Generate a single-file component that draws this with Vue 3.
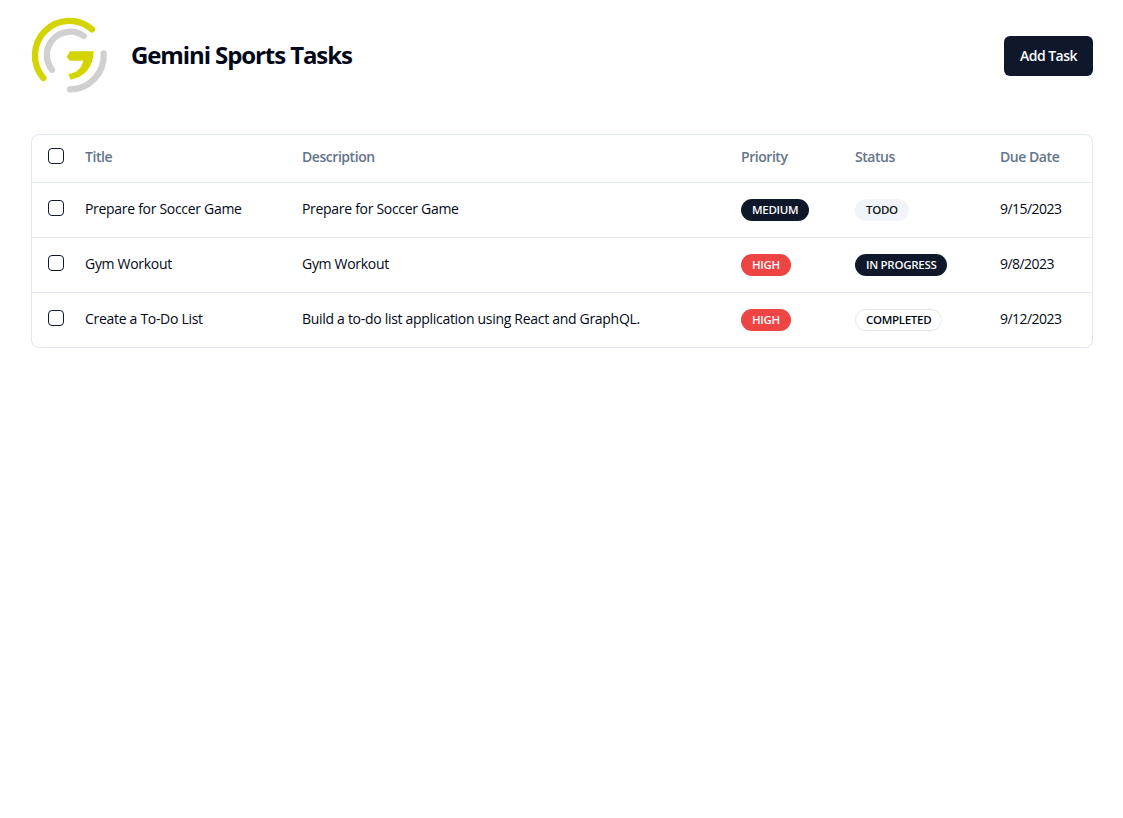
<script setup>
const tasks = [
  { title: 'Prepare for Soccer Game', description: 'Prepare for Soccer Game', priority: 'MEDIUM', pClass: 'dark', status: 'TODO', sClass: 'soft', due: '9/15/2023' },
  { title: 'Gym Workout', description: 'Gym Workout', priority: 'HIGH', pClass: 'red', status: 'IN PROGRESS', sClass: 'dark', due: '9/8/2023' },
  { title: 'Create a To-Do List', description: 'Build a to-do list application using React and GraphQL.', priority: 'HIGH', pClass: 'red', status: 'COMPLETED', sClass: 'outline', due: '9/12/2023' },
]
</script>

<template>
  <div class="page">
    <header class="top">
      <div class="brand">
        <svg class="logo" viewBox="33 39 228 228" width="76" height="76" fill="none" stroke-linecap="round">
          <defs><filter id="soft" x="-10%" y="-10%" width="120%" height="120%"><feGaussianBlur stdDeviation="2.2" /></filter></defs>
          <g filter="url(#soft)">
            <path d="M70 219 A103.5 103.5 0 0 1 216 73" stroke="#d3d400" stroke-width="19" />
            <path d="M96 194 A70 70 0 0 1 191 93" stroke="#d0d0d0" stroke-width="19" />
            <path d="M251 145 A102 102 0 0 1 150 253" stroke="#d0d0d0" stroke-width="19" />
            <path d="M140 156 L150 139 H221 C220 185 195 216 152 224 L145 207 C170 203 183 192 190 167 H150 Z" fill="#d3d400" />
          </g>
        </svg>
        <h1>Gemini Sports Tasks</h1>
      </div>
      <button class="add">Add Task</button>
    </header>
    <div class="card">
      <table>
        <colgroup>
          <col class="c0" /><col class="c1" /><col class="c2" /><col class="c3" /><col class="c4" /><col class="c5" />
        </colgroup>
        <thead>
          <tr>
            <th class="check"><span class="box"></span></th>
            <th>Title</th><th>Description</th><th>Priority</th><th>Status</th><th>Due Date</th>
          </tr>
        </thead>
        <tbody>
          <tr v-for="t in tasks" :key="t.title">
            <td class="check"><span class="box"></span></td>
            <td>{{ t.title }}</td>
            <td>{{ t.description }}</td>
            <td class="tag"><span class="badge" :class="t.pClass">{{ t.priority }}</span></td>
            <td class="tag"><span class="badge" :class="t.sClass">{{ t.status }}</span></td>
            <td class="date">{{ t.due }}</td>
          </tr>
        </tbody>
      </table>
    </div>
  </div>
</template>

<style>
html, body { margin: 0; background: #fff; }
</style>

<style scoped>
.page {
  padding: 18px 30.5px 0;
  font-family: "Open Sans", "Liberation Sans", sans-serif;
  color: #020817;
}
.top { display: flex; justify-content: space-between; align-items: center; height: 76px; margin-bottom: 40px; }
.brand { display: flex; align-items: center; gap: 24px; }
.logo { display: block; margin-left: .5px; overflow: visible; }
h1 { margin: 0 0 2px; font-size: 24px; line-height: 32px; font-weight: 700; letter-spacing: -1.1px; }
.add {
  width: 89px; height: 40px; border: 0; border-radius: 6px; background: #0f172a; color: #f8fafc;
  font: 600 14px/20px "Open Sans", sans-serif; letter-spacing: -.55px; padding: 0; margin-right: -.5px;
}
.card { border: 1px solid #e2e8f0; border-radius: 8px; overflow: hidden; }
table { width: 100%; border-collapse: collapse; table-layout: fixed; font-size: 14px; line-height: 20px; letter-spacing: -.3px; }
.c0 { width: 37.5px; } .c1 { width: 217px; } .c2 { width: 439px; } .c3 { width: 114px; } .c4 { width: 145px; }
th { height: 47px; padding: 0 16px 2px; box-sizing: border-box; text-align: left; font-weight: 600; color: #64748b; border-bottom: 1px solid #e2e8f0; letter-spacing: -.45px; }
td { height: 55px; padding: 0 16px 1px; box-sizing: border-box; border-bottom: 1px solid #e2e8f0; }
tbody tr:last-child td { border-bottom: 0; height: 55px; }
td.tag { padding: 1px 16px 0; }
.check { padding: 0 0 0 16px; }
.box { display: block; width: 14px; height: 14px; border: 1px solid #0f172a; border-radius: 4px; position: relative; top: -2px; }
.date { letter-spacing: -.55px; }
.badge {
  display: inline-block; padding: 2px 10px; border-radius: 999px; border: 1px solid transparent;
  font-size: 11.5px; line-height: 16px; font-weight: 600; letter-spacing: -.3px; vertical-align: middle;
}
.dark { background: #0f172a; color: #f8fafc; }
.red { background: #ef4444; color: #f8fafc; }
.soft { background: #f1f5f9; color: #0f172a; }
.outline { border-color: #e2e8f0; color: #020817; }
</style>
